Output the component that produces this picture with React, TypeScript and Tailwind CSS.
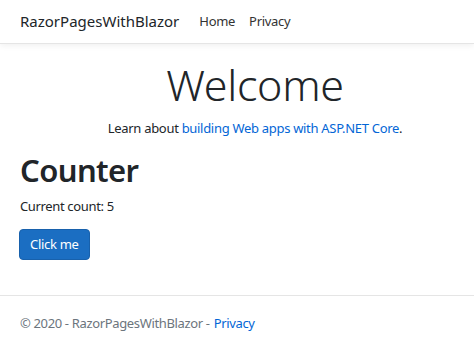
import React, { useState } from 'react';

export default function App() {
  const [count, setCount] = useState(5);

  return (
    <div className="min-h-[349px] flex flex-col bg-white text-[#212529]" style={{ fontFamily: '"Segoe UI", "Noto Sans", sans-serif' }}>
      <header className="h-[44px] border-b border-[#e5e5e5] shadow-[0_2px_6px_rgba(0,0,0,0.06)] flex items-center px-5">
        <a className="text-[15px] text-[#212529] mr-5">RazorPagesWithBlazor</a>
        <nav className="flex gap-[14px] text-[13px] tracking-[-0.3px] text-[#333]">
          <a>Home</a>
          <a>Privacy</a>
        </nav>
      </header>

      <main className="flex-1 px-5">
        <div className="text-center pt-[15px] pl-[36px]">
          <h1 className="text-[43px] tracking-[-0.3px] font-light leading-[1.2] text-[#212529]">Welcome</h1>
          <p className="text-[13px] tracking-[-0.3px] mt-[8px]">
            Learn about <a className="text-[#0366d6]">building Web apps with ASP.NET Core</a>.
          </p>
        </div>

        <h1 className="text-[31px] tracking-[-0.6px] font-semibold leading-[1.2] mt-[14px]">Counter</h1>
        <p className="text-[13px] tracking-[-0.35px] mt-[8px]">Current count: {count}</p>
        <button
          onClick={() => setCount(count + 1)}
          className="mt-[12px] -ml-px bg-[#1b6ec2] border border-[#1861ac] text-white text-[13px] tracking-[-0.3px] rounded-[4px] px-[10px] h-[31px]"
        >
          Click me
        </button>
      </main>

      <footer className="border-t border-[#e5e5e5] h-[54px] flex items-center pt-[3px] px-5 text-[13px] tracking-[-0.35px] text-[#6c757d]">
        © 2020 - RazorPagesWithBlazor - <a className="text-[#0366d6] ml-1">Privacy</a>
      </footer>
    </div>
  );
}
